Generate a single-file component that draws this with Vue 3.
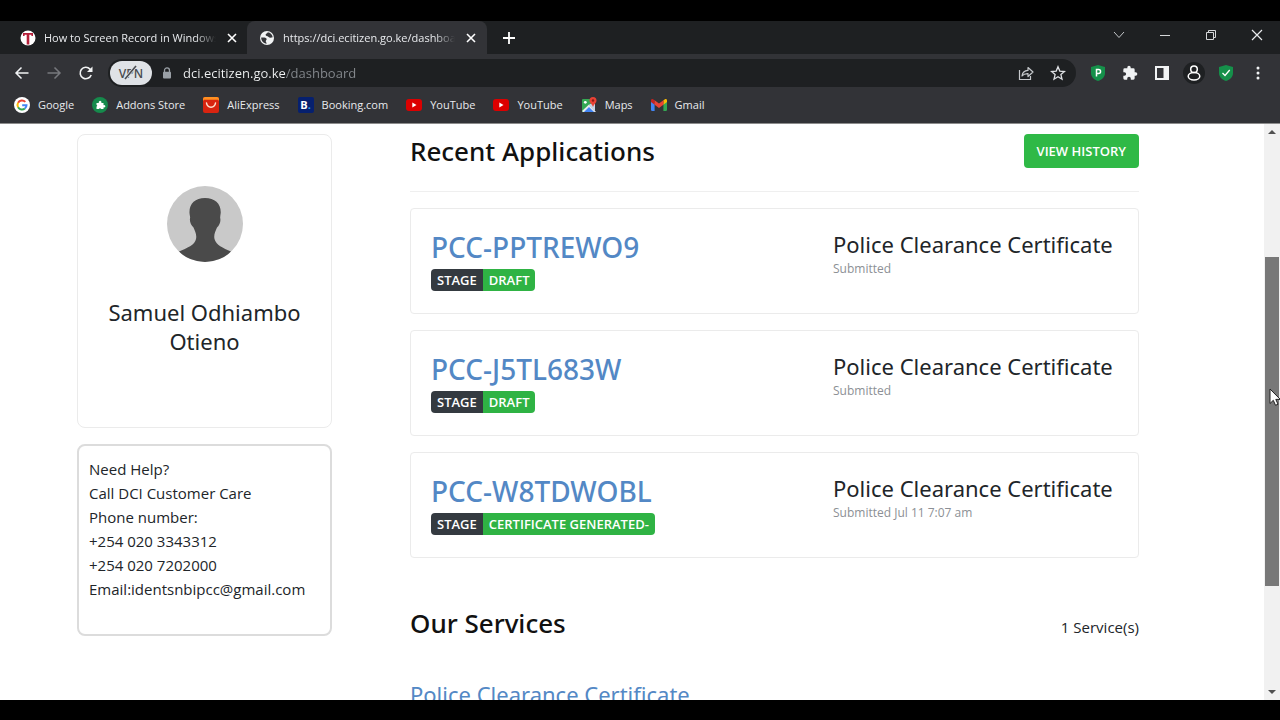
<template>
  <div class="screen">
    <div class="browser">

      <!-- TABS -->
      <header class="tab-strip">
        <div class="tab">
          <svg class="favicon" viewBox="0 0 16 16">
            <circle cx="8" cy="8" r="7.5" fill="#fff" />
            <path d="M3 3h10v3h-1.600V4.800H9.300v9.700H6.700V4.800H4.600V6H3z" fill="#b5203a" />
          </svg>
          <span class="tab-title">How to Screen Record in Windows</span>
          <button class="icon-btn tab-close" aria-label="Close tab">
            <svg viewBox="0 0 10 10"><path d="M1 1l8 8M9 1l-8 8" stroke="#fff" stroke-width="1.600" /></svg>
          </button>
        </div>
        <div class="tab active">
          <svg class="favicon" viewBox="0 0 16 16">
            <circle cx="8" cy="8" r="7" fill="#f1f3f4" />
            <path d="M2.200 7.600c2.300-.3 4.800-.2 5.400 1.200.5 1.200-1 1.500-.8 2.700.1.900.9 1.200.8 2.200C4.500 13.500 2 10.900 2.200 7.600z" fill="#35363a" />
            <path d="M8.800 2.200c-.2 1.400-2.100 1.100-2.200 2.500-.1 1.500 2 1 2.700 2 .8 1.100 2.500 1.300 4.400.6C13.400 4.700 11.500 2.600 8.800 2.200z" fill="#35363a" />
          </svg>
          <span class="tab-title">https://dci.ecitizen.go.ke/dashboa</span>
          <button class="icon-btn tab-close" aria-label="Close tab">
            <svg viewBox="0 0 10 10"><path d="M1 1l8 8M9 1l-8 8" stroke="#fff" stroke-width="1.600" /></svg>
          </button>
        </div>
        <button class="icon-btn new-tab" aria-label="New tab">
          <svg viewBox="0 0 12 12"><path d="M6 0v12M0 6h12" stroke="#fff" stroke-width="1.800" /></svg>
        </button>
        <div class="window-controls">
          <button class="icon-btn" aria-label="Search tabs">
            <svg viewBox="0 0 12 12"><path d="M1 3l5 5.500L11 3" stroke="#c4c7ca" fill="none" /></svg>
          </button>
          <button class="icon-btn" aria-label="Minimize">
            <svg viewBox="0 0 12 12"><path d="M1 6.500h10" stroke="#d5d7d9" /></svg>
          </button>
          <button class="icon-btn" aria-label="Restore">
            <svg viewBox="0 0 12 12"><path d="M1.500 3.500h7v7h-7zM3.500 3.500v-2h7v7h-2" stroke="#d5d7d9" fill="none" /></svg>
          </button>
          <button class="icon-btn" aria-label="Close">
            <svg viewBox="0 0 12 12"><path d="M1 1l10 10M11 1L1 11" stroke="#e8eaed" stroke-width="1.200" /></svg>
          </button>
        </div>
      </header>

      <!-- TOOLBAR -->
      <div class="toolbar">
        <div class="nav-buttons">
          <button class="icon-btn" aria-label="Back">
            <svg viewBox="0 0 16 16"><path d="M14.500 8H2M7.500 2.500L2 8l5.500 5.500" stroke="#f1f3f4" stroke-width="1.500" fill="none" /></svg>
          </button>
          <button class="icon-btn" aria-label="Forward">
            <svg viewBox="0 0 16 16"><path d="M1.500 8H14M8.500 2.500L14 8l-5.500 5.500" stroke="#77797d" stroke-width="1.500" fill="none" /></svg>
          </button>
          <button class="icon-btn" aria-label="Reload">
            <svg viewBox="0 0 16 16">
              <path d="M13.200 10A5.700 5.700 0 1 1 12 4.100L13.500 5.600" stroke="#f1f3f4" stroke-width="1.600" fill="none" />
              <path d="M14.500 1.500v5.500H9z" fill="#f1f3f4" />
            </svg>
          </button>
        </div>

        <div class="omnibox">
          <button class="vpn" aria-label="VPN off">
            <span>VPN</span>
            <svg viewBox="0 0 24 16"><path d="M6 14L17 1" stroke="#dfe2e6" stroke-width="3" /><path d="M6 14L17 1" stroke="#4a4d51" stroke-width="1.600" /></svg>
          </button>
          <svg class="lock" viewBox="0 0 10 12">
            <path d="M2.500 6V3.400a2.500 2.500 0 0 1 5 0V6" stroke="#9aa0a6" stroke-width="1.300" fill="none" />
            <rect x="1" y="4.800" width="8" height="6.700" rx="1" fill="#9aa0a6" />
          </svg>
          <input v-model="address" class="address" type="text" aria-label="Address" spellcheck="false" />
          <button class="icon-btn" aria-label="Share">
            <svg viewBox="0 0 16 16">
              <path d="M1.500 5v9.500h11V11" stroke="#c6c9cc" stroke-width="1.200" fill="none" />
              <path d="M4 11c.4-3.600 2.400-5.400 6-5.600V2.500L15 7l-5 4.500V8.600C7.300 8.500 5.400 9.200 4 11z" stroke="#c6c9cc" stroke-width="1.200" fill="none" stroke-linejoin="round" />
            </svg>
          </button>
          <button class="icon-btn" aria-label="Bookmark this page">
            <svg viewBox="0 0 16 16"><path d="M8 1.700l1.800 4.400 4.700.4-3.600 3.100 1.100 4.600L8 11.700l-4 2.500 1.100-4.600L1.500 6.500l4.700-.4z" stroke="#dfe1e5" stroke-width="1.300" fill="none" /></svg>
          </button>
        </div>

        <div class="extensions">
          <button class="icon-btn" aria-label="Proxy">
            <svg viewBox="0 0 16 16">
              <path d="M8 0l7 2v6c0 4-3 6.700-7 8-4-1.300-7-4-7-8V2z" fill="#15904a" />
              <path d="M6.500 11.500v-7H8.600a1.900 1.900 0 0 1 0 3.900H6.500" stroke="#fff" stroke-width="1.500" fill="none" />
            </svg>
          </button>
          <button class="icon-btn" aria-label="Extensions">
            <svg viewBox="0 0 24 24"><path d="M20.500 11H19V7a2 2 0 0 0-2-2h-4V3.500a2.500 2.500 0 0 0-5 0V5H4a2 2 0 0 0-2 2v3.800h1.500a2.700 2.700 0 0 1 0 5.400H2V20a2 2 0 0 0 2 2h3.800v-1.500a2.700 2.700 0 0 1 5.400 0V22H17a2 2 0 0 0 2-2v-4h1.500a2.500 2.500 0 0 0 0-5z" fill="#f1f3f4" /></svg>
          </button>
          <button class="icon-btn" aria-label="Side panel">
            <svg viewBox="0 0 16 16"><path d="M1 1h14v14H1zM3 3v10h6.500V3z" fill="#f1f3f4" fill-rule="evenodd" /></svg>
          </button>
          <button class="icon-btn account" aria-label="Account">
            <svg viewBox="0 0 16 16"><g stroke="#fff" stroke-width="1.500" fill="none"><circle cx="8" cy="4.300" r="3.300" /><ellipse cx="8" cy="11.300" rx="5.800" ry="3.700" /></g></svg>
          </button>
          <button class="icon-btn" aria-label="Protection">
            <svg viewBox="0 0 16 16">
              <path d="M8 0l7 2v6c0 4-3 6.700-7 8-4-1.300-7-4-7-8V2z" fill="#15904a" />
              <path d="M4.500 8l2.500 2.500L11.700 5" stroke="#fff" stroke-width="1.300" fill="none" />
            </svg>
          </button>
          <button class="icon-btn" aria-label="Menu">
            <svg viewBox="0 0 16 16" fill="#f1f3f4"><circle cx="8" cy="3" r="1.500" /><circle cx="8" cy="8" r="1.500" /><circle cx="8" cy="13" r="1.500" /></svg>
          </button>
        </div>
      </div>

      <!-- BOOKMARKS -->
      <nav class="bookmarks">
        <a v-for="(b, i) in bookmarks" :key="i" href="#">
          <svg v-if="b.icon === 'google'" viewBox="0 0 16 16" fill="none" stroke-width="2">
            <circle cx="8" cy="8" r="8" fill="#fff" />
            <path d="M11.300 4.900A4.500 4.500 0 0 0 4.100 5.800" stroke="#ea4335" />
            <path d="M4.100 5.800a4.500 4.500 0 0 0 0 4.500" stroke="#fbbc05" />
            <path d="M4.100 10.300a4.500 4.500 0 0 0 6.800 1.200" stroke="#34a853" />
            <path d="M10.900 11.500A4.500 4.500 0 0 0 12.500 8.200H8.200" stroke="#4285f4" />
          </svg>
          <svg v-else-if="b.icon === 'addons'" viewBox="0 0 16 16">
            <circle cx="8" cy="8" r="8" fill="#168a4c" />
            <path d="M4.500 6h2.400a1.400 1.400 0 1 1 2.400 0H11.500v2.200a1.200 1.200 0 1 1 0 2V12H9.200a1.300 1.300 0 0 0-2.400 0H4.500V9.700a1.200 1.200 0 0 0 0-2z" fill="#fff" />
          </svg>
          <svg v-else-if="b.icon === 'aliexpress'" viewBox="0 0 16 16">
            <rect width="16" height="16" rx="2" fill="#d92410" />
            <path d="M0 4V2a2 2 0 0 1 2-2h12a2 2 0 0 1 2 2v2l-1-1.200H1z" fill="#ff9021" />
            <path d="M3.500 6c.8 5.500 8.200 5.500 9 0" stroke="#ffe1cf" stroke-width="1.500" fill="none" stroke-linecap="round" />
          </svg>
          <span v-else-if="b.icon === 'booking'" class="booking">B<i>.</i></span>
          <svg v-else-if="b.icon === 'youtube'" viewBox="0 0 16 16">
            <rect y="2" width="16" height="12" rx="3" fill="#dc0000" />
            <path d="M6.300 5.500v5L10.500 8z" fill="#fff" />
          </svg>
          <svg v-else-if="b.icon === 'maps'" viewBox="0 0 16 16">
            <path d="M1 3a1 1 0 0 1 1-1h9v6L2 15H1z" fill="#34a853" />
            <path d="M1 14l7-6.500L15 15H2z" fill="#e8eaed" />
            <path d="M3 15l5-5 5 5z" fill="#4285f4" />
            <path d="M9 7l5-1v9L8 8z" fill="#c7d3e5" />
            <circle cx="4.300" cy="5.300" r="1.400" fill="#fff" />
            <path d="M12 0a3.500 3.500 0 0 1 3.500 3.500C15.500 6 13 7 12 10c-1-3-3.500-4-3.500-6.500A3.500 3.500 0 0 1 12 0z" fill="#e94235" />
            <circle cx="12" cy="3.500" r="1.200" fill="#8c1b13" />
          </svg>
          <svg v-else viewBox="0 0 16 16">
            <path d="M0 3.500L3.600 6.200V14H1.200A1.200 1.200 0 0 1 0 12.800z" fill="#4285f4" />
            <path d="M16 3.500l-3.600 2.700V14h2.400a1.200 1.200 0 0 0 1.200-1.200z" fill="#34a853" />
            <path d="M12.400 3.300L14 2.200c.9-.6 2 0 2 1.200v1.700l-3.600 2.700z" fill="#fbbc04" />
            <path d="M3.600 3.300L2 2.200C1.100 1.600 0 2.200 0 3.400v1.700l3.600 2.700z" fill="#c5221f" />
            <path d="M3.600 3.300L8 6.600l4.400-3.300v4.500L8 11.100 3.600 7.800z" fill="#ea4335" />
          </svg>
          <span>{{ b.title }}</span>
        </a>
      </nav>

      <!-- PAGE -->
      <div class="viewport">
        <main class="page">
          <aside class="sidebar">
            <section class="profile">
              <svg class="avatar" viewBox="0 0 76 76">
                <defs><clipPath id="round"><circle cx="38" cy="38" r="38" /></clipPath></defs>
                <g clip-path="url(#round)">
                  <rect width="76" height="76" fill="#c9c9c9" />
                  <path d="M38 12c-10 0-16 6-15.500 15 .1 2 .8 3.500.6 5-.8 3.500.8 7 3.400 9.500C28 45 30 49 29 53c-1 6-9 9-17 12.500L20 80h36l8-14.500C56 62 49 59 47.500 53c-1-4 1-8 2.500-11.500 2.600-2.500 4-6 3.200-9.500-.2-1.500.4-3 .5-5C54.200 18 48 12 38 12z" fill="#4a4a4a" />
                </g>
              </svg>
              <h2>Samuel Odhiambo Otieno</h2>
            </section>

            <section class="help">
              <p v-for="line in help" :key="line">{{ line }}</p>
            </section>
          </aside>

          <div class="content">
            <div class="content-head">
              <h1>Recent Applications</h1>
              <button class="history-btn">VIEW HISTORY</button>
            </div>

            <article v-for="a in applications" :key="a.code" class="application">
              <div>
                <a class="code" href="#">{{ a.code }}</a>
                <div class="badge">
                  <span class="stage">STAGE</span>
                  <span class="status">{{ a.status }}</span>
                </div>
              </div>
              <div class="service">
                <h3>{{ a.service }}</h3>
                <p>{{ a.submitted }}</p>
              </div>
            </article>

            <div class="services-head">
              <h1>Our Services</h1>
              <span>1 Service(s)</span>
            </div>
            <a class="service-link" href="#">Police Clearance Certificate</a>
          </div>
        </main>

        <div class="scrollbar">
          <svg viewBox="0 0 16 16"><path d="M4 10l4-4 4 4z" fill="#505050" /></svg>
          <div class="track"><div class="thumb"></div></div>
          <svg viewBox="0 0 16 16"><path d="M4 6l4 4 4-4z" fill="#505050" /></svg>
        </div>

        <svg class="cursor" viewBox="0 0 12 18">
          <path d="M1 1v14.500l3.300-3.200 2.200 5 2.500-1.100-2.200-4.800h4.500z" fill="#fff" stroke="#222" />
        </svg>
      </div>

    </div>
  </div>
</template>

<script setup>
import { ref } from "vue";

const address = ref("dci.ecitizen.go.ke/dashboard");

const bookmarks = [
  { icon: "google", title: "Google" },
  { icon: "addons", title: "Addons Store" },
  { icon: "aliexpress", title: "AliExpress" },
  { icon: "booking", title: "Booking.com" },
  { icon: "youtube", title: "YouTube" },
  { icon: "youtube", title: "YouTube" },
  { icon: "maps", title: "Maps" },
  { icon: "gmail", title: "Gmail" },
];

const help = [
  "Need Help?",
  "Call DCI Customer Care",
  "Phone number:",
  "+254 020 3343312",
  "+254 020 7202000",
  "Email:identsnbipcc@gmail.com",
];

const applications = [
  { code: "PCC-PPTREWO9", status: "DRAFT", service: "Police Clearance Certificate", submitted: "Submitted" },
  { code: "PCC-J5TL683W", status: "DRAFT", service: "Police Clearance Certificate", submitted: "Submitted" },
  { code: "PCC-W8TDWOBL", status: "CERTIFICATE GENERATED-", service: "Police Clearance Certificate", submitted: "Submitted Jul 11 7:07 am" },
];
</script>

<style>
body {
  background: #000;
}
</style>

<style scoped>
.screen {
  box-sizing: border-box;
  height: 100vh;
  padding: 21px 0 20px;
  background: #000;
  font-family: "Open Sans", "Noto Sans", sans-serif;
  color: #212529;
}

.screen *,
.screen *::before {
  box-sizing: border-box;
}

.browser {
  display: flex;
  flex-direction: column;
  height: 100%;
  background: #323337;
}

h1,
h2,
h3,
p {
  margin: 0;
}

a {
  text-decoration: none;
}

button {
  font-family: inherit;
  border: none;
  cursor: pointer;
}

.icon-btn {
  display: flex;
  align-items: center;
  justify-content: center;
  flex: none;
  width: 32px;
  height: 28px;
  padding: 0;
  background: none;
}

.icon-btn svg {
  width: 16px;
  height: 16px;
}

/* tabs */
.tab-strip {
  display: flex;
  flex: none;
  height: 33px;
  background: #1e2022;
}

.tab {
  display: flex;
  align-items: center;
  gap: 8px;
  width: 240px;
  padding: 0 8px 0 12px;
  color: #e8eaed;
  font-size: 11px;
}

.tab:first-child {
  width: 247px;
  padding: 0 7px 0 20px;
}

.tab.active {
  background: #323337;
  border-radius: 8px 8px 0 0;
}

.favicon {
  flex: none;
  width: 16px;
  height: 16px;
}

.tab-title {
  flex: 1;
  overflow: hidden;
  white-space: nowrap;
  mask-image: linear-gradient(to right, #000 88%, transparent);
}

.tab-close {
  width: 16px;
}

.tab-close svg {
  width: 10px;
  height: 10px;
}

.new-tab {
  width: 44px;
  height: 33px;
}

.new-tab svg,
.window-controls svg {
  width: 12px;
  height: 12px;
}

.window-controls {
  display: flex;
  margin-left: auto;
}

.window-controls .icon-btn {
  width: 46px;
}

/* toolbar */
.toolbar {
  display: flex;
  align-items: center;
  flex: none;
  height: 38px;
  padding: 0 6px;
}

.nav-buttons,
.extensions {
  display: flex;
}

.omnibox {
  display: flex;
  align-items: center;
  flex: 1;
  height: 28px;
  margin: 0 6px;
  padding: 0 2px;
  border-radius: 14px;
  background: #1e2022;
}

.vpn {
  position: relative;
  width: 42px;
  height: 24px;
  padding: 0;
  border-radius: 12px;
  background: #dfe2e6;
  color: #4a4d51;
  font-size: 12px;
  font-weight: 600;
}

.vpn svg {
  position: absolute;
  top: 4px;
  left: 9px;
  width: 24px;
  height: 16px;
}

.lock {
  width: 10px;
  height: 12px;
  margin: 0 11px 0 10px;
}

.address {
  flex: 1;
  min-width: 0;
  padding: 0;
  border: none;
  outline: none;
  font-family: inherit;
  font-size: 13px;
  /* the host is brighter than the path */
  background: linear-gradient(to right, #f1f3f4 103px, #85898e 103px);
  background-clip: text;
  color: transparent;
  caret-color: #fff;
}

.account::before {
  content: "";
  position: absolute;
  width: 22px;
  height: 22px;
  border-radius: 50%;
  background: #1e2022;
}

.account svg {
  position: relative;
}

/* bookmarks */
.bookmarks {
  display: flex;
  flex: none;
  gap: 18px;
  height: 32px;
  padding: 0 14px 6px;
  border-bottom: 1px solid #8c8c8c;
}

.bookmarks a {
  display: flex;
  align-items: center;
  gap: 8px;
  color: #e8eaed;
  font-size: 11px;
}

.bookmarks svg,
.booking {
  width: 16px;
  height: 16px;
}

.booking {
  border-radius: 2px;
  background: #06206f;
  color: #fff;
  font-size: 11px;
  font-weight: 700;
  line-height: 16px;
  text-align: center;
}

.booking i {
  color: #2aa5ee;
  font-style: normal;
}

/* page */
.viewport {
  position: relative;
  display: flex;
  flex: 1;
  min-height: 0;
  overflow: hidden;
  background: #fff;
}

.page {
  display: grid;
  grid-template-columns: 255px minmax(0, 1fr);
  gap: 78px;
  flex: 1;
  padding: 10px 125px 0 77px;
}

.sidebar {
  display: flex;
  flex-direction: column;
  gap: 16px;
}

.profile {
  padding: 51px 20px 71px;
  border: 1px solid #ebebeb;
  border-radius: 8px;
  text-align: center;
}

.avatar {
  display: block;
  width: 76px;
  height: 76px;
  margin: 0 auto 36px;
}

.profile h2 {
  font-family: "Noto Sans", sans-serif;
  font-size: 22px;
  font-weight: 400;
  line-height: 29px;
}

.help {
  padding: 11px 10px 33px;
  border: 2px solid #dcdcdc;
  border-radius: 8px;
  font-size: 15px;
  line-height: 24px;
}

h1 {
  font-family: "Noto Sans", sans-serif;
  font-size: 26px;
  font-weight: 500;
  line-height: 34px;
  color: #111;
}

.content-head,
.services-head {
  display: flex;
  justify-content: space-between;
}

.content-head {
  height: 58px;
  margin-bottom: 16px;
  border-bottom: 1px solid #efefef;
}

.history-btn {
  height: 34px;
  padding: 0 13px;
  border-radius: 4px;
  background: #2fb946;
  color: #fff;
  font-size: 13px;
  font-weight: 600;
}

.application {
  display: flex;
  justify-content: space-between;
  height: 106px;
  margin-bottom: 16px;
  padding: 20px;
  border: 1px solid #ebebeb;
  border-radius: 4px;
}

.code {
  display: block;
  margin-bottom: 4px;
  color: #5388c5;
  font-family: "Noto Sans", sans-serif;
  font-size: 28px;
  font-weight: 500;
  line-height: 36px;
}

.badge {
  display: flex;
  width: fit-content;
  overflow: hidden;
  border-radius: 4px;
  color: #fff;
  font-size: 13px;
  font-weight: 600;
  line-height: 22px;
}

.stage,
.status {
  padding: 0 6px;
}

.stage {
  background: #343a40;
}

.status {
  background: #2fb344;
}

.service {
  min-width: 285px;
}

.service h3 {
  font-family: "Noto Sans", sans-serif;
  font-size: 22px;
  font-weight: 400;
  line-height: 30px;
}

.service p {
  margin-top: 2px;
  color: #8c9095;
  font-size: 12px;
  line-height: 16px;
}

.services-head {
  align-items: baseline;
  margin: 48px 0 36px;
  font-size: 15px;
}

.service-link {
  color: #5388c5;
  font-family: "Noto Sans", sans-serif;
  font-size: 22px;
  line-height: 36px;
}

/* scrollbar */
.scrollbar {
  display: flex;
  flex-direction: column;
  flex: none;
  width: 16px;
  background: #f1f1f1;
}

.scrollbar svg {
  width: 16px;
  height: 16px;
}

.track {
  display: flex;
  flex-direction: column;
  flex: 1;
  padding: 0 1px;
}

.track::before {
  content: "";
  height: 21.500%;
}

.thumb {
  height: 60.500%;
  background: #787878;
}

.cursor {
  position: absolute;
  top: 264px;
  right: -1px;
  width: 12px;
  height: 18px;
}
</style>
